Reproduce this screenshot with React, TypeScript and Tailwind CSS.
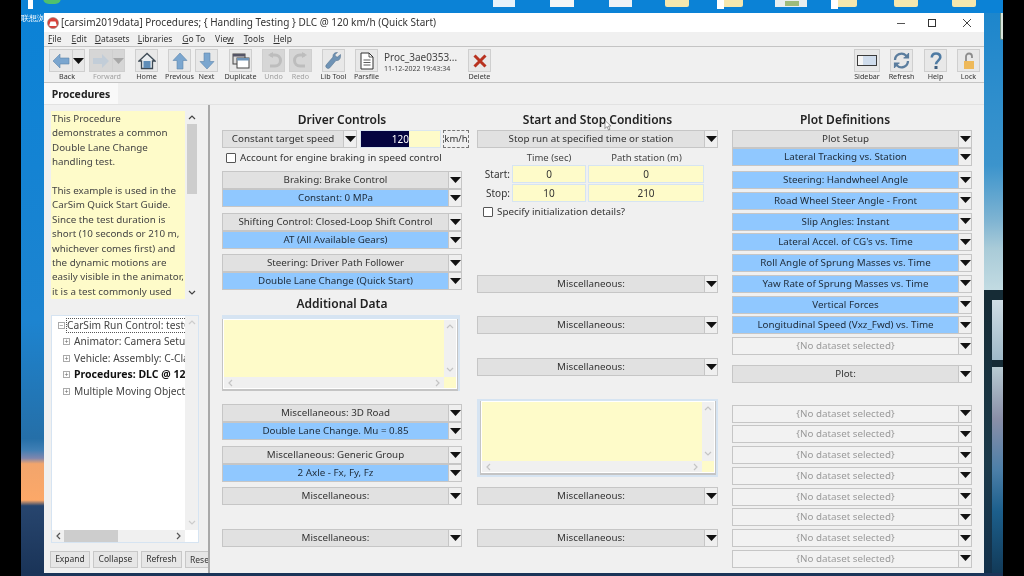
import React from "react";

const Tri = ({ c = "#111" }: { c?: string }) => (
  <svg width="11" height="6" viewBox="0 0 11 6"><path d="M0 0h11L5.5 6z" fill={c} /></svg>
);

type Kind = "gray" | "blue" | "empty";
const kinds: Record<Kind, string> = {
  gray: "bg-[#e1e1e1] text-[#333]",
  blue: "bg-[#90c8ff] text-[#1d2a38]",
  empty: "bg-[#f2f2f2] text-[#9a9a9a]",
};

const Combo = ({ text, kind = "gray", className = "" }: { text: string; kind?: Kind; className?: string }) => (
  <div className={`flex h-[18px] shrink-0 border border-[#c6c6c6] bg-[#e6e6e6] ${className}`}>
    <div className={`flex-1 min-w-0 flex items-center justify-center pt-px text-[9.8px] whitespace-nowrap ${kinds[kind]}`}>{text}</div>
    <div className="w-[13px] border-l border-[#c6c6c6] bg-[#efefef] flex items-center justify-center pb-px">
      <Tri />
    </div>
  </div>
);

const Heading = ({ children, className = "" }: { children: React.ReactNode; className?: string }) => (
  <div className={`h-[18px] flex items-center justify-center text-[12px] font-semibold text-[#222] ${className}`}>{children}</div>
);

const Check = ({ label, className = "" }: { label: string; className?: string }) => (
  <div className={`h-[14px] flex items-center gap-[4px] text-[9.8px] text-[#333] whitespace-nowrap ${className}`}>
    <span className="w-[10px] h-[10px] border border-[#555] bg-white rounded-[1px]" />
    {label}
  </div>
);

const Chev = ({ d, c = "#777" }: { d: "u" | "d" | "l" | "r"; c?: string }) => {
  const p = { u: "M1 5l3-3 3 3", d: "M1 2l3 3 3-3", l: "M5 1L2 4l3 3", r: "M3 1l3 3-3 3" }[d];
  return (
    <svg width="8" height="8" viewBox="0 0 8 8" fill="none" stroke={c} strokeWidth="1.2"><path d={p} /></svg>
  );
};

const TextArea = ({ className = "" }: { className?: string }) => (
  <div className={`border-[#d6e4f2] bg-white ${className}`}>
    <div className="h-full border-l border-b-2 border-r border-[#c4c4c4] flex flex-col bg-white p-px">
      <div className="flex-1 flex min-h-0">
        <div className="flex-1 bg-[#fefbc9]" />
        <div className="w-[12px] bg-[#f0f0f0] flex flex-col items-center justify-between py-[3px]">
          <Chev d="u" c="#c4c4c4" />
          <Chev d="d" c="#c4c4c4" />
        </div>
      </div>
      <div className="h-[11px] flex">
        <div className="flex-1 bg-[#f0f0f0] flex items-center justify-between px-[3px]">
          <Chev d="l" c="#c4c4c4" />
          <Chev d="r" c="#c4c4c4" />
        </div>
        <div className="w-[12px] bg-[#fefbc9]" />
      </div>
    </div>
  </div>
);

const Tool = ({ label, children, w = "w-[23px]", className = "", dim = false }: { label: string; children: React.ReactNode; w?: string; className?: string; dim?: boolean }) => (
  <div className={`flex flex-col items-center shrink-0 ${w} ${className}`}>
    <div className={`h-[23px] shrink-0 w-full flex items-center justify-center border border-[#cfcfcf] ${dim ? "bg-[#d6d6d6]" : "bg-[#e8e8e8]"}`}>{children}</div>
    <div className={`text-[7.2px] leading-[9px] whitespace-nowrap ${dim ? "text-[#a0a0a0]" : "text-[#333]"}`}>{label}</div>
  </div>
);

const U = ({ children }: { children: string }) => <span className="underline underline-offset-1">{children}</span>;

const desc = [
  "This Procedure",
  "demonstrates a common",
  "Double Lane Change",
  "handling test.",
  "\u00a0",
  "This example is used in the",
  "CarSim Quick Start Guide.",
  "Since the test duration is",
  "short (10 seconds or 210 m,",
  "whichever comes first) and",
  "the dynamic motions are",
  "easily visible in the animator,",
  "it is a test commonly used",
];

const TreeRow = ({ text, bold = false }: { text: string; bold?: boolean }) => (
  <div className="h-[16.5px] flex items-center pl-[11px] whitespace-nowrap">
    <span className="w-[7px] h-[7px] border border-[#aaa] text-[7px] leading-[5px] text-center text-[#666] shrink-0">+</span>
    <span className="w-[2px] shrink-0" />
    <span className={`ml-[2px] ${bold ? "text-[10.5px] font-bold text-[#111]" : "text-[10.2px] text-[#444]"}`}>{text}</span>
  </div>
);

const Btn = ({ text, w }: { text: string; w: string }) => (
  <div className={`h-[17px] shrink-0 border border-[#c8c8c8] bg-[#e6e6e6] flex items-center justify-center text-[8.5px] text-[#333] ${w}`}>{text}</div>
);

const plots = [
  "Steering: Handwheel Angle",
  "Road Wheel Steer Angle - Front",
  "Slip Angles: Instant",
  "Lateral Accel. of CG's vs. Time",
  "Roll Angle of Sprung Masses vs. Time",
  "Yaw Rate of Sprung Masses vs. Time",
  "Vertical Forces",
  "Longitudinal Speed (Vxz_Fwd) vs. Time",
];

const Folder = ({ x }: { x: string }) => (
  <div className={`absolute top-0 h-[7px] w-[24px] rounded-b-[2px] bg-[#f6e7ae] ${x}`} />
);

export default function App() {
  return (
    <div className="w-[1024px] h-[576px] overflow-hidden bg-black flex font-['Noto_Sans',sans-serif] blur-[0.35px]">
      <div className="w-[21px] shrink-0" />
      <div className="w-[982px] shrink-0 flex flex-col">
        {/* desktop top */}
        <div className="relative h-[13px] shrink-0 bg-[#0b82d6] overflow-hidden">
          <div className="absolute left-[7px] top-0 w-[5px] h-[9px] bg-white" />
          <div className="absolute left-[22px] -top-[8px] w-[18px] h-[12px] rounded-full bg-[#4fc06e]" />
          <div className="absolute left-[472px] top-0 w-[22px] h-[7px] bg-[#e8f2fa]" />
          <div className="absolute left-[529px] top-0 w-[24px] h-[7px] bg-[#f6f6f6]" />
          <div className="absolute left-[588px] top-0 w-[23px] h-[7px] bg-[#eef2f6]" />
          <Folder x="left-[644px]" />
          <Folder x="left-[698px]" />
          <div className="absolute left-[696px] top-0 w-[7px] h-[9px] bg-white" />
          <div className="absolute left-[754px] top-0 w-[32px] h-[7px] bg-[#e8eef0]" />
          <div className="absolute left-[764px] top-[1px] w-[14px] h-[5px] bg-[#9dbb7c]" />
          <Folder x="left-[812px]" />
          <div className="absolute left-[810px] top-0 w-[7px] h-[9px] bg-white" />
          <Folder x="left-[873px]" />
          <Folder x="left-[931px]" />
        </div>
        <div className="flex flex-1 min-h-0">
          {/* left desktop strip */}
          <div className="w-[23px] shrink-0 relative overflow-hidden bg-[linear-gradient(180deg,#0b82d6_0%,#1d84d0_55%,#256fa8_76%,#3f7fb4_78%,#7f86ae_79.5%,#f2a56c_80.5%,#fca868_87%,#27456e_88%,#1a3458_100%)]">
            <div className="text-[8px] leading-[10px] text-white whitespace-nowrap">联想浏</div>
          </div>
          {/* window */}
          <div className="w-[940px] shrink-0 bg-[#f0f0f0] flex flex-col">
            <div className="h-[19px] bg-white flex items-center shrink-0 relative">
              <svg className="ml-[3px]" width="12" height="12" viewBox="0 0 12 12">
                <circle cx="6" cy="6" r="5.500" fill="#d8413a" stroke="#888" strokeWidth=".6" />
                <path d="M2.500 7.500l1-3h5l1 3v1.500h-7z" fill="#fff" />
              </svg>
              <span className="ml-[2px] text-[10px] text-[#333] whitespace-nowrap">[carsim2019data] Procedures; {"{"} Handling Testing {"}"} DLC @ 120 km/h (Quick Start)</span>
              <div className="ml-auto flex items-center mr-[12px]">
                <svg width="10" height="10" viewBox="0 0 10 10"><path d="M1 5.500h8" stroke="#555" /></svg>
                <svg className="ml-[21px]" width="10" height="10" viewBox="0 0 10 10"><rect x="1.500" y="1.500" width="7" height="7" fill="none" stroke="#333" /></svg>
                <svg className="ml-[25px]" width="10" height="10" viewBox="0 0 10 10"><path d="M1 1l8 8M9 1l-8 8" stroke="#444" /></svg>
              </div>
            </div>
            <div className="h-[14px] shrink-0 flex items-center pl-[4px] text-[8.5px] text-[#333] whitespace-nowrap">
              <span><U>F</U>ile</span>
              <span className="ml-[10px]"><U>E</U>dit</span>
              <span className="ml-[8px]"><U>D</U>atasets</span>
              <span className="ml-[8px]"><U>L</U>ibraries</span>
              <span className="ml-[10px]"><U>G</U>o To</span>
              <span className="ml-[10px]">Vie<U>w</U></span>
              <span className="ml-[10px]"><U>T</U>ools</span>
              <span className="ml-[9px]"><U>H</U>elp</span>
            </div>
            {/* toolbar */}
            <div className="h-[37px] shrink-0 border-y border-[#c4c4c4] flex pt-[2px] pl-[5px] pr-[4px]">
              <Tool label="Back" w="w-[36px]">
                <div className="flex-1 flex justify-center">
                  <svg width="18" height="16" viewBox="0 0 18 16"><path d="M1 8l7-7v4h9v6H8v4z" fill="#7ba6cf" stroke="#5f86ab" strokeWidth=".6" /></svg>
                </div>
                <div className="w-[12px] h-full border-l border-[#cfcfcf] flex items-center justify-center"><Tri /></div>
              </Tool>
              <Tool label="Forward" w="w-[36px]" className="ml-[4px]" dim>
                <div className="flex-1 flex justify-center">
                  <svg width="18" height="16" viewBox="0 0 18 16"><path d="M17 8l-7-7v4H1v6h9v4z" fill="#c2cdd8" /></svg>
                </div>
                <div className="w-[12px] h-full border-l border-[#cfcfcf] flex items-center justify-center"><Tri c="#a8a8a8" /></div>
              </Tool>
              <Tool label="Home" className="ml-[10px]">
                <svg width="18" height="18" viewBox="0 0 18 18"><path d="M9 1.500L1 9h2.500v7.500h11V9H17z" fill="#e9edf0" stroke="#3d4a55" strokeWidth="1.300" /><rect x="5.500" y="9" width="7" height="7" fill="#5f8db8" /></svg>
              </Tool>
              <Tool label="Previous" className="ml-[10px]">
                <svg width="16" height="18" viewBox="0 0 16 18"><path d="M8 1L1 8.500h4V17h6V8.500h4z" fill="#7ba6cf" stroke="#5f86ab" strokeWidth=".6" /></svg>
              </Tool>
              <Tool label="Next" className="ml-[4px]">
                <svg width="16" height="18" viewBox="0 0 16 18"><path d="M8 17L1 9.500h4V1h6v8.500h4z" fill="#7ba6cf" stroke="#5f86ab" strokeWidth=".6" /></svg>
              </Tool>
              <Tool label="Duplicate" className="ml-[11px]">
                <svg width="18" height="16" viewBox="0 0 18 16"><rect x="1" y="1" width="12" height="10" fill="#ddd" stroke="#444" /><rect x="1" y="1" width="12" height="2.500" fill="#556" /><rect x="5" y="5" width="12" height="10" fill="#fff" stroke="#444" /><rect x="5" y="5" width="12" height="2.500" fill="#6d93b8" /></svg>
              </Tool>
              <Tool label="Undo" className="ml-[10px]" dim>
                <svg width="16" height="18" viewBox="0 0 16 18" fill="none"><path d="M4 3h5a5.500 5.500 0 010 11H4" stroke="#bdbdbd" strokeWidth="3" /><path d="M7 0L2 3l5 3z" fill="#bdbdbd" /></svg>
              </Tool>
              <Tool label="Redo" className="ml-[4px]" dim>
                <svg width="16" height="18" viewBox="0 0 16 18" fill="none"><path d="M12 3H7a5.500 5.500 0 000 11h5" stroke="#bdbdbd" strokeWidth="3" /><path d="M9 0l5 3-5 3z" fill="#bdbdbd" /></svg>
              </Tool>
              <Tool label="Lib Tool" className="ml-[10px]">
                <svg width="17" height="18" viewBox="0 0 17 18"><path d="M15.500 2.500l-3 2.500-2-.5-.5-2L12.500.5C10 0 7.500 2 8 5L1.500 12.500a2.300 2.300 0 003.300 3.300L11 8.500c3 .5 5-1.500 4.500-6z" fill="#6f93b5" stroke="#4a6b88" strokeWidth=".5" /></svg>
              </Tool>
              <Tool label="Parsfile" className="ml-[10px]">
                <svg width="14" height="18" viewBox="0 0 14 18"><path d="M1 1h8l4 4v12H1z" fill="#fff" stroke="#333" /><path d="M9 1v4h4M3.500 8h7M3.500 10.500h7M3.500 13h7" fill="none" stroke="#333" strokeWidth=".8" /></svg>
              </Tool>
              <div className="ml-[6px] w-[80px] shrink-0 text-[#444] whitespace-nowrap">
                <div className="text-[10px] leading-[14px] mt-[1px]">Proc_3ae0353...</div>
                <div className="text-[7px] leading-[9px]">11-12-2022 19:43:34</div>
              </div>
              <Tool label="Delete" className="ml-[4px]">
                <svg width="14" height="14" viewBox="0 0 14 14"><path d="M1.500 1.500l11 11M12.500 1.500l-11 11" stroke="#b8321f" strokeWidth="3" /></svg>
              </Tool>
              <Tool label="Sidebar" w="w-[26px]" className="ml-auto">
                <svg width="20" height="11" viewBox="0 0 20 11"><rect x=".5" y=".5" width="19" height="10" fill="#cfdcec" stroke="#3c3c3c" /><rect x="1" y="1" width="5" height="9" fill="#f5f5f5" /></svg>
              </Tool>
              <Tool label="Refresh" className="ml-[10px]">
                <svg width="17" height="17" viewBox="0 0 17 17" fill="none" stroke="#5b7d9e" strokeWidth="2.300"><path d="M2 8a6.500 6.500 0 0111-4.500l1.500 1.500M15 9a6.500 6.500 0 01-11 4.500L2.500 12" /><path d="M15.500 1v5h-5M1.500 16v-5h5" strokeWidth="1.200" fill="#5b7d9e" /></svg>
              </Tool>
              <Tool label="Help" className="ml-[11px]">
                <svg width="12" height="18" viewBox="0 0 12 18" fill="none"><path d="M1.800 5.500C1.800 3 3.500 1.500 6 1.500s4.300 1.500 4.300 3.800c0 3.200-4.300 3.500-4.300 7" stroke="#4f7ba3" strokeWidth="2.600" /><rect x="4.500" y="14" width="3" height="3" fill="#3f5f7f" /></svg>
              </Tool>
              <Tool label="Lock" className="ml-[10px]">
                <svg width="12" height="18" viewBox="0 0 12 18"><path d="M3 9V4.500a3 3 0 016 0V6" fill="none" stroke="#8c8c8c" strokeWidth="1.800" /><rect x="1" y="9" width="10" height="8" fill="#eeb95a" /></svg>
              </Tool>
            </div>
            {/* tab row */}
            <div className="h-[22px] shrink-0 border-b border-[#e2e2e2] flex">
              <div className="w-[74px] bg-[#f9f9f9] flex items-center justify-center pt-[2px] text-[10.5px] font-bold text-[#222]">Procedures</div>
            </div>
            {/* body */}
            <div className="flex-1 min-h-0 flex">
              {/* sidebar */}
              <div className="w-[164px] shrink-0 flex flex-col overflow-hidden">
                <div className="h-[188px] shrink-0 mt-[6px] ml-[7px] flex w-[147px]">
                  <div className="w-[134px] h-full bg-[#fefbc9] pt-[1px] overflow-hidden">
                    {desc.map((l, i) => (
                      <div key={i} className="h-[14.4px] leading-[14.4px] text-[9.8px] text-[#444] whitespace-nowrap pl-[1px]">{l}</div>
                    ))}
                  </div>
                  <div className="w-[12px] ml-px flex flex-col items-center">
                    <div className="h-[13px] flex items-center"><Chev d="u" c="#444" /></div>
                    <div className="w-[10px] h-[70px] bg-[#cdcdcd]" />
                    <div className="mt-auto h-[13px] flex items-center"><Chev d="d" c="#444" /></div>
                  </div>
                </div>
                <div className="h-[228px] w-[148px] shrink-0 mt-[16px] ml-[7px] border border-[#d6e4f2] bg-white flex flex-col">
                  <div className="flex-1 min-h-0 flex">
                    <div className="w-[133px] overflow-hidden pt-[1px]">
                      <div className="h-[16.5px] flex items-center pl-[6px] whitespace-nowrap">
                        <span className="w-[7px] h-[7px] border border-[#aaa] text-[7px] leading-[5px] text-center text-[#666] shrink-0">−</span>
                        <span className="ml-[1px] border border-dotted border-[#555] text-[10.2px] leading-[13px] text-[#444]">CarSim Run Control: testCar</span>
                      </div>
                      <TreeRow text="Animator: Camera Setup" />
                      <TreeRow text="Vehicle: Assembly: C-Class" />
                      <TreeRow text="Procedures: DLC @ 120 km/h" bold />
                      <TreeRow text="Multiple Moving Objects" />
                    </div>
                    <div className="flex-1 bg-[#f0f0f0] flex flex-col items-center justify-between py-[3px]">
                      <Chev d="u" c="#ccc" />
                      <Chev d="d" c="#ccc" />
                    </div>
                  </div>
                  <div className="h-[12px] shrink-0 flex">
                    <div className="w-[133px] bg-[#f0f0f0] flex items-center relative px-[3px] justify-between">
                      <Chev d="l" c="#555" />
                      <div className="absolute left-[12px] top-0 h-full w-[54px] bg-[#cdcdcd]" />
                      <Chev d="r" c="#555" />
                    </div>
                  </div>
                </div>
                <div className="mt-[8px] ml-[6px] flex gap-[3px]">
                  <Btn text="Expand" w="w-[40px]" />
                  <Btn text="Collapse" w="w-[45px]" />
                  <Btn text="Refresh" w="w-[41px]" />
                  <div className="h-[17px] w-[30px] shrink-0 border border-[#c8c8c8] bg-[#e6e6e6] text-[8.5px] leading-[15px] pl-[4px] text-[#333]">Reset</div>
                </div>
              </div>
              {/* splitter */}
              <div className="w-[2px] shrink-0 bg-[#a9a9a9]" />
              {/* main */}
              <div className="flex-1 min-w-0 flex pl-[12px]">
                {/* col 1 */}
                <div className="w-[240px] shrink-0 flex flex-col pt-[6px]">
                  <Heading>Driver Controls</Heading>
                  <div className="mt-px flex h-[18px] w-[248px] shrink-0">
                    <Combo text="Constant target speed" className="w-[135px]" />
                    <div className="ml-[3px] w-[81px] bg-[#fefbc9] border border-[#dbe6ef] flex">
                      <div className="w-[48px] bg-[#04043f] text-white text-[10px] leading-[16px] text-right">120</div>
                    </div>
                    <div className="ml-[2px] w-[26px] border border-dashed border-[#777] text-[9.5px] leading-[15px] text-center text-[#333]">km/h</div>
                  </div>
                  <Check label="Account for engine braking in speed control" className="mt-[3px] ml-[4px]" />
                  <Combo text="Braking: Brake Control" className="mt-[6px]" />
                  <Combo text="Constant: 0 MPa" kind="blue" />
                  <Combo text="Shifting Control: Closed-Loop Shift Control" className="mt-[6px]" />
                  <Combo text="AT (All Available Gears)" kind="blue" />
                  <Combo text="Steering: Driver Path Follower" className="mt-[5px]" />
                  <Combo text="Double Lane Change (Quick Start)" kind="blue" />
                  <Heading className="mt-[5px]">Additional Data</Heading>
                  <TextArea className="h-[76px] mt-[2px] mr-[2px] border-t-[4px] border-r-[2px]" />
                  <Combo text="Miscellaneous: 3D Road" className="mt-[13px]" />
                  <Combo text="Double Lane Change. Mu = 0.85" kind="blue" />
                  <Combo text="Miscellaneous: Generic Group" className="mt-[6px]" />
                  <Combo text="2 Axle - Fx, Fy, Fz" kind="blue" />
                  <Combo text="Miscellaneous:" className="mt-[5px]" />
                  <Combo text="Miscellaneous:" className="mt-[24px]" />
                </div>
                {/* col 2 */}
                <div className="w-[241px] shrink-0 ml-[15px] flex flex-col pt-[6px] relative">
                  <Heading>Start and Stop Conditions</Heading>
                  <svg className="absolute left-[127px] top-[15px]" width="8" height="11" viewBox="0 0 8 11"><path d="M1 .5v8l2-2 1.500 3.500 1.500-.7L4.500 6H7z" fill="#fff" stroke="#555" strokeWidth=".6" /></svg>
                  <Combo text="Stop run at specified time or station" className="mt-px" />
                  <div className="mt-[3px] h-[14px] flex text-[9.5px] leading-[14px] text-[#444]">
                    <div className="w-[35px]" />
                    <div className="w-[74px] text-center">Time (sec)</div>
                    <div className="w-[117px] ml-[2px] text-center">Path station (m)</div>
                  </div>
                  <div className="flex h-[18px] text-[10px] text-[#333]">
                    <div className="w-[33px] text-right leading-[18px]">Start:</div>
                    <div className="ml-[2px] w-[74px] bg-[#fefbc9] border border-[#d6e4f2] text-center leading-[16px]">0</div>
                    <div className="ml-[2px] w-[116px] bg-[#fefbc9] border border-[#d6e4f2] text-center leading-[16px]">0</div>
                  </div>
                  <div className="mt-px flex h-[18px] text-[10px] text-[#333]">
                    <div className="w-[33px] text-right leading-[18px]">Stop:</div>
                    <div className="ml-[2px] w-[74px] bg-[#fefbc9] border border-[#d6e4f2] text-center leading-[16px]">10</div>
                    <div className="ml-[2px] w-[116px] bg-[#fefbc9] border border-[#d6e4f2] text-center leading-[16px]">210</div>
                  </div>
                  <Check label="Specify initialization details?" className="mt-[3px] ml-[6px]" />
                  <Combo text="Miscellaneous:" className="mt-[56px]" />
                  <Combo text="Miscellaneous:" className="mt-[23px]" />
                  <Combo text="Miscellaneous:" className="mt-[24px]" />
                  <TextArea className="h-[78px] mt-[23px] border-2 border-l-[3px]" />
                  <Combo text="Miscellaneous:" className="mt-[10px]" />
                  <Combo text="Miscellaneous:" className="mt-[24px]" />
                </div>
                {/* col 3 */}
                <div className="w-[240px] shrink-0 ml-[14px] flex flex-col pt-[6px]">
                  <Heading className="pr-[14px]">Plot Definitions</Heading>
                  <Combo text="Plot Setup" className="mt-px" />
                  <Combo text="Lateral Tracking vs. Station" kind="blue" />
                  <div className="mt-[5px] flex flex-col gap-[2.75px]">
                    {plots.map((p) => (
                      <Combo key={p} text={p} kind="blue" />
                    ))}
                    <Combo text="{No dataset selected}" kind="empty" />
                  </div>
                  <Combo text="Plot:" className="mt-[10px]" />
                  <div className="mt-[21.5px] flex flex-col gap-[2.75px]">
                    {[0, 1, 2, 3, 4, 5, 6, 7].map((i) => (
                      <Combo key={i} text="{No dataset selected}" kind="empty" />
                    ))}
                  </div>
                </div>
              </div>
            </div>
          </div>
          {/* right desktop strip */}
          <div className="w-[19px] shrink-0 flex flex-col overflow-hidden">
            <div className="h-[277px] shrink-0 bg-[linear-gradient(180deg,#1d86cc_0%,#3c94cc_55%,#7fb4d2_75%,#a9cbd8_85%,#c2dbe2_100%)] relative">
              <div className="absolute left-[16px] -top-[5px] w-[6px] h-[32px] border border-[#6f8f7f] rounded-[2px] bg-[#d8e4dc]" />
            </div>
            <div className="flex-1 flex bg-[#162c36] pt-[10px]">
              <div className="w-[8px] shrink-0 bg-[linear-gradient(180deg,#162c36_0%,#1c3a4a_60%,#12304a_100%)]" />
              <div className="flex-1 flex flex-col gap-[7px]">
                <div className="h-[60px] shrink-0 bg-[linear-gradient(180deg,#cfdde4_0%,#9fb9c8_100%)]" />
                <div className="flex-1 bg-[linear-gradient(180deg,#b8cbd2_0%,#8a8fa8_25%,#4c7fa8_50%,#1c5f8c_70%,#123a58_100%)]" />
              </div>
            </div>
          </div>
        </div>
        <div className="h-[3px] shrink-0 bg-[#1a3458]" />
      </div>
    </div>
  );
}
